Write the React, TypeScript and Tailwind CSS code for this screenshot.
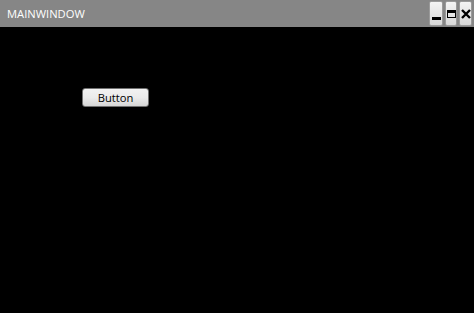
import React from "react";

export default function App() {
  const font = { fontFamily: '"Open Sans", "Noto Sans", sans-serif' };
  return (
    <div className="w-[474px] h-[313px] bg-black flex flex-col overflow-hidden" style={font}>
      <div className="h-[27px] bg-[#868686] flex items-start">
        <div className="flex-1 pl-[7px] pt-[7px] text-[11.2px] leading-[14px] text-white">MAINWINDOW</div>
        <div className="flex gap-[2px] pt-[1px] pr-[2px]">
          <div className="w-[14px] h-[25px] rounded-[2px] bg-gradient-to-b from-[#f4f4f4] to-[#d8d8d8] border border-[#9a9a9a] flex items-end justify-center pb-[5px]">
            <div className="w-[9px] h-[3px] bg-black" />
          </div>
          <div className="w-[12px] h-[25px] rounded-[2px] bg-gradient-to-b from-[#f4f4f4] to-[#d8d8d8] border border-[#9a9a9a] flex items-center justify-center">
            <div className="w-[9px] h-[8px] border border-black border-t-[3px]" />
          </div>
          <div className="w-[13px] h-[25px] rounded-[2px] bg-gradient-to-b from-[#f4f4f4] to-[#d8d8d8] border border-[#9a9a9a] flex items-center justify-center">
            <svg width="10" height="10" viewBox="0 0 10 10">
              <path d="M1 1 L9 9 M9 1 L1 9" stroke="black" strokeWidth="2.4" />
            </svg>
          </div>
        </div>
      </div>
      <div className="flex-1 pl-[82px] pt-[61px]">
        <button className="w-[67px] h-[19px] rounded-[3px] border border-[#707070] bg-gradient-to-b from-[#f2f2f2] via-[#ebebeb] to-[#d6d6d6] text-[11.2px] leading-[16px] text-black flex items-center justify-center" style={font}>
          Button
        </button>
      </div>
    </div>
  );
}
